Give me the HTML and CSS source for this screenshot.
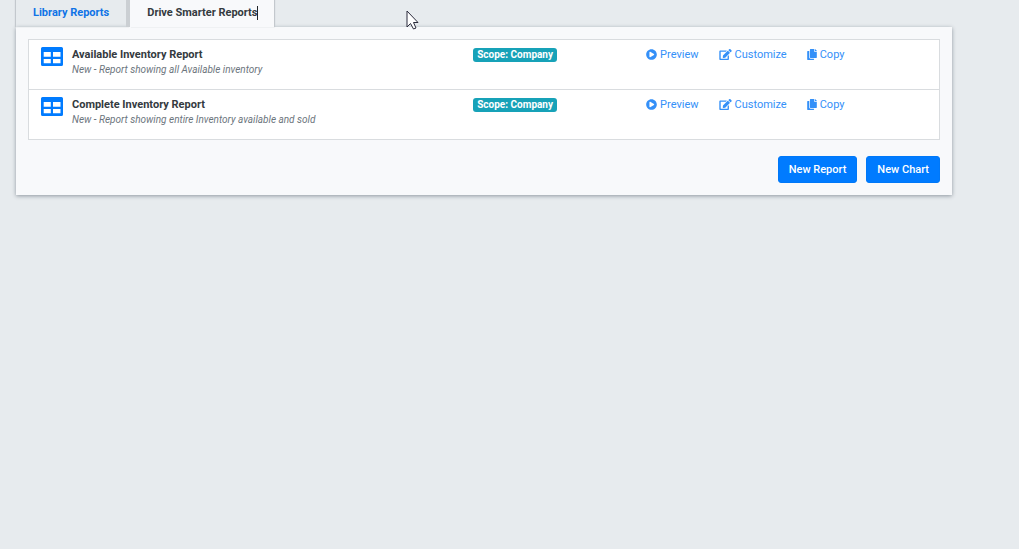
FILE: index.html
```html
<!DOCTYPE html>
<html lang="en">

<head>
  <meta charset="UTF-8">
  <meta name="viewport" content="width=device-width, initial-scale=1.0">
  <title>Reports</title>
  <link rel="stylesheet" href="styles.css">
</head>

<body>
  <!-- Shared icons -->
  <svg class="sprite" aria-hidden="true">
    <symbol id="icon-table" viewBox="0 0 22 19">
      <path fill-rule="evenodd" d="M1.500 0H20.500Q22 0 22 1.500V17.500Q22 19 20.500 19H1.500Q0 19 0 17.500V1.500Q0 0 1.500 0ZM2.700 5V9.800H9.800V5ZM12 5V9.800H19.500V5ZM2.700 12V16.300H9.800V12ZM12 12V16.300H19.500V12Z"/>
    </symbol>
    <symbol id="icon-play" viewBox="0 0 512 512">
      <path d="M256 8C119 8 8 119 8 256s111 248 248 248 248-111 248-248S393 8 256 8zm115.700 272l-176 101c-15.800 8.800-35.700-2.500-35.700-21V152c0-18.400 19.800-29.800 35.700-21l176 107c16.400 9.200 16.400 32.900 0 42z"/>
    </symbol>
    <symbol id="icon-edit" viewBox="0 0 576 512">
      <path d="M402.600 83.200l90.200 90.200c3.800 3.800 3.800 10 0 13.800L274.400 405.600l-92.800 10.300c-12.400 1.400-22.900-9.100-21.500-21.500l10.300-92.800L388.800 83.200c3.800-3.800 10-3.800 13.800 0zm162-22.900l-48.800-48.800c-15.200-15.200-39.900-15.200-55.200 0l-35.400 35.400c-3.800 3.800-3.800 10 0 13.800l90.200 90.200c3.800 3.800 10 3.800 13.800 0l35.400-35.400c15.200-15.300 15.200-40 0-55.200zM384 346.200V448H64V128h229.800c3.200 0 6.200-1.300 8.500-3.500l40-40c7.600-7.600 2.200-20.500-8.500-20.500H48C21.500 64 0 85.500 0 112v352c0 26.500 21.500 48 48 48h352c26.500 0 48-21.500 48-48V306.200c0-10.700-12.900-16-20.500-8.500l-40 40c-2.200 2.300-3.500 5.300-3.500 8.500z"/>
    </symbol>
    <symbol id="icon-copy" viewBox="0 0 448 512">
      <path d="M320 448v40c0 13.255-10.745 24-24 24H24c-13.255 0-24-10.745-24-24V120c0-13.255 10.745-24 24-24h72v296c0 30.879 25.121 56 56 56h168zm0-344V0H152c-13.255 0-24 10.745-24 24v368c0 13.255 10.745 24 24 24h272c13.255 0 24-10.745 24-24V128H344c-13.200 0-24-10.800-24-24zm120.971-31.029L375.029 7.029A24 24 0 0 0 358.059 0H352v96h96v-6.059a24 24 0 0 0-7.029-16.970z"/>
    </symbol>
  </svg>

  <main class="reports">
    <nav class="tabs">
      <a class="tab" href="#library">Library Reports</a>
      <a class="tab active" href="#drive"><span class="tab-text">Drive Smarter Reports</span></a>
    </nav>

    <section class="panel">
      <ul class="report-list">
        <li class="report">
          <div class="report-info">
            <svg class="report-icon"><use href="#icon-table"/></svg>
            <div>
              <h2>Available Inventory Report</h2>
              <p>New - Report showing all Available inventory</p>
            </div>
          </div>
          <div class="report-scope"><span class="badge">Scope: Company</span></div>
          <div class="report-actions">
            <a href="#preview"><svg class="icon"><use href="#icon-play"/></svg>Preview</a>
            <a href="#customize"><svg class="icon icon-wide"><use href="#icon-edit"/></svg>Customize</a>
            <a href="#copy"><svg class="icon icon-narrow"><use href="#icon-copy"/></svg>Copy</a>
          </div>
        </li>
        <li class="report">
          <div class="report-info">
            <svg class="report-icon"><use href="#icon-table"/></svg>
            <div>
              <h2>Complete Inventory Report</h2>
              <p>New - Report showing entire Inventory available and sold</p>
            </div>
          </div>
          <div class="report-scope"><span class="badge">Scope: Company</span></div>
          <div class="report-actions">
            <a href="#preview"><svg class="icon"><use href="#icon-play"/></svg>Preview</a>
            <a href="#customize"><svg class="icon icon-wide"><use href="#icon-edit"/></svg>Customize</a>
            <a href="#copy"><svg class="icon icon-narrow"><use href="#icon-copy"/></svg>Copy</a>
          </div>
        </li>
      </ul>

      <div class="buttons">
        <button type="button">New Report</button>
        <button type="button">New Chart</button>
      </div>
    </section>
  </main>

  <svg class="pointer" viewBox="0 0 13 20" aria-hidden="true">
    <path d="M1 1V17L4.500 13.500L7.500 19L10 18L7.500 12.500H12Z"/>
  </svg>
</body>

</html>
```

FILE: styles.css
```css
* {
  box-sizing: border-box;
}

body {
  min-height: 100vh;
  margin: 0;
  background-color: #e7ebee;
  color: #343a40;
  font-family: Roboto, Arial, sans-serif;
  font-size: 11px;
  line-height: 16px;
}

a {
  color: #3490f8;
  text-decoration: none;
}

.sprite {
  display: none;
}

.reports {
  margin: 0 67px 0 16px;
}

/* Tabs */
.tabs {
  display: flex;
}

.tab {
  padding: 5px 17px 6px;
  border-right: 4px solid #cbcfd3;
  box-shadow: -1px 0 1px #c3c8cd;
  color: #0f73e6;
  font-weight: 700;
}

.tab.active {
  position: relative;
  z-index: 1;
  border: 0;
  background-color: #f8f9fb;
  color: #343a40;
  box-shadow: 1px 0 1px #c3c8cd;
}

.tab-text {
  position: relative;
}

.tab-text::after {
  content: "";
  position: absolute;
  top: 0;
  left: 100%;
  width: 1px;
  height: 14px;
  background-color: #212529;
}

/* Panel */
.panel {
  padding: 12px;
  background-color: #f8f9fb;
  box-shadow: 0 1px 4px #8f979f;
}

.report-list {
  margin: 0;
  padding: 0;
  border: 1px solid #d9dcdf;
  border-bottom: 0;
  background-color: #fff;
  list-style: none;
}

.report {
  display: grid;
  grid-template-columns: 20fr 8fr 13fr;
  min-height: 50px;
  padding: 7px 12px;
  border-bottom: 1px solid #d9dcdf;
}

.report-info {
  display: flex;
  gap: 9px;
}

.report-icon {
  width: 22px;
  height: 19px;
  fill: #007bff;
}

.report h2 {
  margin: 0;
  font-size: 11px;
  font-weight: 700;
}

.report p {
  margin: 0;
  color: #6c757d;
  font-size: 10px;
  font-style: italic;
  line-height: 14px;
}

.badge {
  display: block;
  width: fit-content;
  margin-top: 1px;
  padding: 0 4px;
  border-radius: 3px;
  background-color: #17a2b8;
  color: #fff;
  font-size: 10px;
  font-weight: 700;
  line-height: 14px;
}

.report-actions {
  display: flex;
  gap: 20px;
}

.report-actions a {
  display: flex;
  gap: 3px;
  height: 16px;
}

.icon {
  width: 11px;
  height: 11px;
  margin-top: 2px;
  fill: currentColor;
}

.icon-wide {
  width: 13px;
}

.icon-narrow {
  width: 10px;
}

.buttons {
  display: flex;
  justify-content: flex-end;
  gap: 9px;
  margin-top: 16px;
}

.buttons button {
  padding: 5px 10px;
  border: 1px solid #0078f8;
  border-radius: 3px;
  background-color: #007bff;
  color: #fff;
  font-family: inherit;
  font-size: 11px;
  font-weight: 500;
  line-height: 15px;
}

/* Mouse pointer */
.pointer {
  position: absolute;
  top: 10px;
  left: 406px;
  width: 13px;
  height: 20px;
  fill: #fff;
  stroke: #2b2b3c;
}
```
